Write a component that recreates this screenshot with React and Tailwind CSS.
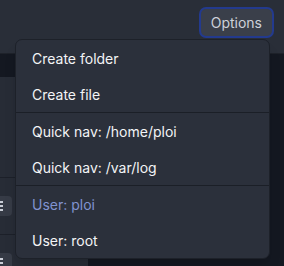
import React from "react";

const items = [
  [{ t: "Create folder" }, { t: "Create file" }],
  [{ t: "Quick nav: /home/ploi" }, { t: "Quick nav: /var/log" }],
  [{ t: "User: ploi", active: true }, { t: "User: root" }],
];

function Row({ btn }) {
  return (
    <div className="h-[57px] border-t border-[#1c2029] flex items-center">
      {btn && (
        <div className="ml-[-12px] h-[20px] w-[24px] rounded-[4px] bg-[#363b46] flex items-center justify-end pr-[9px]">
          <div className="flex flex-col gap-[2px]">
            <div className="h-[2px] w-[4px] bg-[#c9cdd6]" />
            <div className="h-[2px] w-[4px] bg-[#c9cdd6]" />
            <div className="h-[2px] w-[4px] bg-[#c9cdd6]" />
          </div>
        </div>
      )}
    </div>
  );
}

export default function App() {
  return (
    <div
      className="relative w-[284px] h-[266px] overflow-hidden bg-[#141821] flex flex-col"
      style={{ fontFamily: "Inter, 'Noto Sans', sans-serif" }}
    >
      <div className="h-[54px] shrink-0 bg-[#292e38] border-b border-[#1e222a] flex justify-end items-start pt-[9px] pr-[12px]">
        <button className="h-[27px] px-[10px] rounded-[5px] bg-[#3a3f4a] ring-2 ring-[#233a8e] text-[14px] leading-[27px] text-[#cdd1d9]">
          Options
        </button>
      </div>
      <div className="flex-1 flex">
        <div className="mt-[23px] w-[88px] bg-[#272c36] flex flex-col">
          <div className="h-[100px]" />
          <Row btn />
          <Row btn />
        </div>
      </div>

      <div className="absolute left-[15px] top-[39px] w-[255px] rounded-[7px] border border-[#1d2129] bg-[#2b303b] shadow-lg overflow-hidden">
        {items.map((group, gi) => (
          <div key={gi} className={gi > 0 ? "border-t border-[#1b1f27]" : ""}>
            {group.map((it) => (
              <div
                key={it.t}
                className={`h-[36px] flex items-center pl-[16px] text-[14px] ${
                  it.active ? "text-[#8193d0]" : "text-[#f3f4f6]"
                }`}
              >
                {it.t}
              </div>
            ))}
          </div>
        ))}
      </div>
    </div>
  );
}
